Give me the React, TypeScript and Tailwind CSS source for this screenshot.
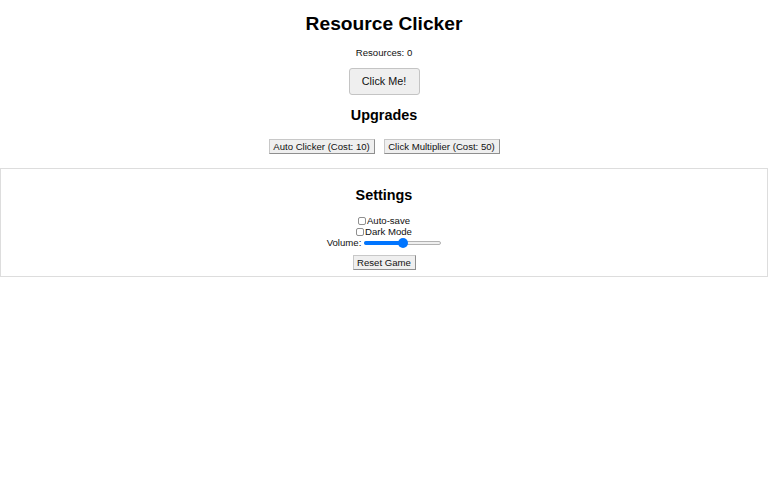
const font = { fontFamily: '"Liberation Sans", Arial, sans-serif' };

const smallBtn =
  "h-[15px] border border-[#c8c8c8] border-b-[#8f8f8f] border-r-[#8f8f8f] bg-[#efefef] text-[9.6px] leading-[13px] text-[#111]";

function Box({ label }: { label: string }) {
  return (
    <label className="flex items-center justify-center h-[11px] text-[9.6px] leading-[11px] text-[#111]">
      <span className="mr-[1px] inline-block h-[8px] w-[8px] rounded-[2px] border border-[#8f8f8f] bg-white" />
      {label}
    </label>
  );
}

export default function App() {
  return (
    <div style={font} className="min-h-[480px] w-full bg-white text-black">
      {/* Header */}
      <div className="flex flex-col items-center">
        <h1 className="mt-[13px] text-[19.2px] font-bold leading-[22px]">Resource Clicker</h1>
        <p className="mt-[12px] text-[9.6px] leading-[11px] text-[#111]">Resources: 0</p>
        <button className="mt-[10px] h-[27px] w-[71px] rounded-[3px] border border-[#c4c4c4] bg-[#efefef] text-[10.8px] leading-[13px] text-[#111]">
          Click Me!
        </button>
        <h2 className="mt-[12px] text-[14.4px] font-bold leading-[17px]">Upgrades</h2>
        <div className="mt-[15px] flex gap-[9px]">
          <button className={`${smallBtn} w-[106px]`}>Auto Clicker (Cost: 10)</button>
          <button className={`${smallBtn} w-[116px]`}>Click Multiplier (Cost: 50)</button>
        </div>
      </div>

      {/* Settings */}
      <div className="mt-[14px] flex h-[109px] w-[768px] flex-col items-center border border-[#dddddd]">
        <h2 className="mt-[18px] text-[14.4px] font-bold leading-[17px]">Settings</h2>
        <div className="mt-[11px] flex flex-col items-center">
          <Box label="Auto-save" />
          <Box label="Dark Mode" />
          <div className="flex h-[11px] items-center text-[9.6px] leading-[11px] text-[#111]">
            <span className="mr-[3px]">Volume:</span>
            <div className="relative h-[10px] w-[77px]">
              <div className="absolute left-0 right-0 top-[3px] h-[4px] rounded-full border border-[#b2b2b2] bg-[#efefef]" />
              <div className="absolute left-0 top-[3px] h-[4px] w-[38px] rounded-l-full bg-[#0075ff]" />
              <div className="absolute left-[34px] top-0 h-[10px] w-[10px] rounded-full bg-[#0075ff]" />
            </div>
          </div>
        </div>
        <button className={`${smallBtn} mt-[7px] w-[63px]`}>Reset Game</button>
      </div>
    </div>
  );
}
